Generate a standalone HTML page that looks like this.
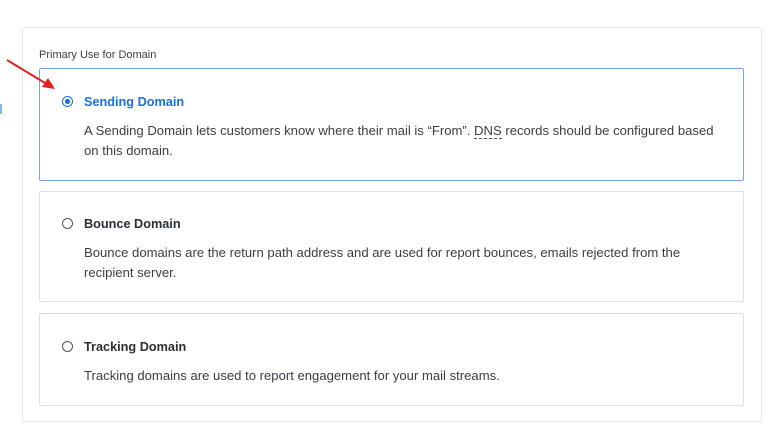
<!DOCTYPE html>
<html><head><style>
*{margin:0;padding:0;box-sizing:border-box}
body{width:768px;height:429px;background:#fff;font-family:"Liberation Sans",sans-serif;position:relative;overflow:hidden;color:#2b2f33}
.panel{position:absolute;left:22px;top:27px;width:740px;height:395px;border:1px solid #e5e8eb}
.title{position:absolute;left:39px;top:49px;font-size:11px;color:#3a3f44}
.card{position:absolute;left:39px;width:705px;border:1px solid #dde1e5;border-radius:2px}
.card.sel{border-color:#6fa6ee}
.radio{position:absolute;left:22px;width:11px;height:11px;border:1.3px solid #555;border-radius:50%}
.sel .radio{border-color:#1b6ee0}
.sel .radio:after{content:"";position:absolute;left:2px;top:2px;width:4.5px;height:4.5px;border-radius:50%;background:#1b6ee0}
.h{position:absolute;left:44px;font-size:12.7px;font-weight:bold;color:#2b2f33}
.sel .h{color:#1b6ee0}
.d{position:absolute;left:44px;white-space:nowrap;font-size:13.1px;line-height:20px;color:#3a3f44}
</style></head><body>
<div class="panel"></div>
<div class="title">Primary Use for Domain</div>
<div style="position:absolute;left:0;top:104px;width:2px;height:10px;background:#8ab4ec"></div>
<div class="card sel" style="top:68px;height:113px">
 <div class="radio" style="top:27px"></div>
 <div class="h" style="top:26px">Sending Domain</div>
 <div class="d" style="top:52px">A Sending Domain lets customers know where their mail is “From”. <span style="border-bottom:1px dashed #555">DNS</span> records should be configured based<br>on this domain.</div>
</div>
<div class="card" style="top:191px;height:111px">
 <div class="radio" style="top:26px"></div>
 <div class="h" style="top:25px">Bounce Domain</div>
 <div class="d" style="top:51px">Bounce domains are the return path address and are used for report bounces, emails rejected from the<br>recipient server.</div>
</div>
<div class="card" style="top:313px;height:93px">
 <div class="radio" style="top:27px"></div>
 <div class="h" style="top:26px">Tracking Domain</div>
 <div class="d" style="top:52px">Tracking domains are used to report engagement for your mail streams.</div>
</div>
<svg style="position:absolute;left:0;top:0" width="80" height="100"><line x1="7" y1="60" x2="50" y2="86" stroke="#e52020" stroke-width="2"/><polygon points="55,89 42,87 48,78" fill="#e52020"/></svg>
</body></html>
